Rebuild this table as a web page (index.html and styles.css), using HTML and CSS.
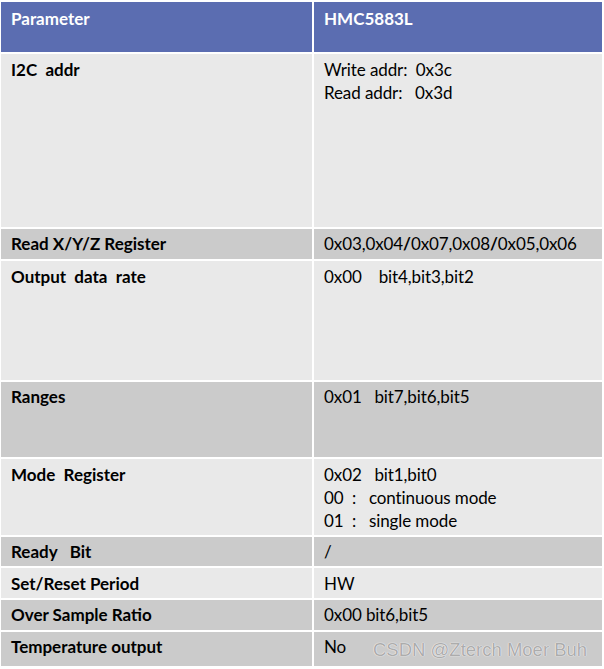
FILE: index.html
```html
<!DOCTYPE html>
<html>
<head>
<meta charset="utf-8">
<link rel="stylesheet" href="styles.css">
</head>
<body>
<div class="page">
  <div class="table">
    <div class="cell head">Parameter</div>
    <div class="cell head">HMC5883L</div>

    <div class="cell key light">I2C  addr</div>
    <div class="cell val light">Write addr:  0x3c
Read addr:   0x3d</div>

    <div class="cell key dark">Read X/Y/Z Register</div>
    <div class="cell val dark">0x03,0x04<b>/</b>0x07,0x08<b>/</b>0x05,0x06</div>

    <div class="cell key light">Output  data  rate</div>
    <div class="cell val light">0x00    bit4,bit3,bit2</div>

    <div class="cell key dark">Ranges</div>
    <div class="cell val dark">0x01   bit7,bit6,bit5</div>

    <div class="cell key light">Mode  Register</div>
    <div class="cell val light">0x02   bit1,bit0
00  :   continuous mode
01  :   single mode</div>

    <div class="cell key dark">Ready   Bit</div>
    <div class="cell val dark">/</div>

    <div class="cell key light">Set/Reset Period</div>
    <div class="cell val light">HW</div>

    <div class="cell key dark">Over Sample Ratio</div>
    <div class="cell val dark">0x00 bit6,bit5</div>

    <div class="cell key dark">Temperature output</div>
    <div class="cell val dark">No</div>
  </div>
  <div class="watermark">CSDN @Zterch Moer Buh</div>
</div>
</body>
</html>
```
FILE: styles.css
```css
html, body {
  margin: 0;
  padding: 0;
  background: #ffffff;
}
.page {
  position: relative;
  width: 604px;
  height: 669px;
  padding: 2px 0 0 1px;
  box-sizing: border-box;
}
.table {
  width: 601px;
  display: grid;
  grid-template-columns: 311px 288px;
  grid-template-rows: 50px 173px 30px 119px 75px 76px 29px 30px 30px 34px;
  gap: 2px;
  background: #ffffff;
  font-family: Lato, "Open Sans", sans-serif;
  font-size: 17px;
  line-height: 23px;
  color: #000000;
}
.cell {
  padding: 3px 10px 0 10px;
  white-space: pre;
  box-sizing: border-box;
}
.head {
  background: #5b6db1;
  color: #ffffff;
  font-weight: bold;
  padding-top: 5px;
}
.key {
  font-weight: bold;
}
.val {
  letter-spacing: -0.1px;
}
.val b {
  font-weight: bold;
}
.light {
  background: #e9e9e9;
}
.dark {
  background: #cbcbcb;
}
.light.key, .light.val {
  padding-top: 4px;
}
.watermark {
  position: absolute;
  left: 373px;
  top: 639px;
  font-family: "Liberation Sans", Arial, sans-serif;
  font-size: 18.5px;
  line-height: 22px;
  color: #acacac;
  text-shadow: 0 0 1px #ffffff, 0 0 1px #ffffff;
  white-space: pre;
}
```
